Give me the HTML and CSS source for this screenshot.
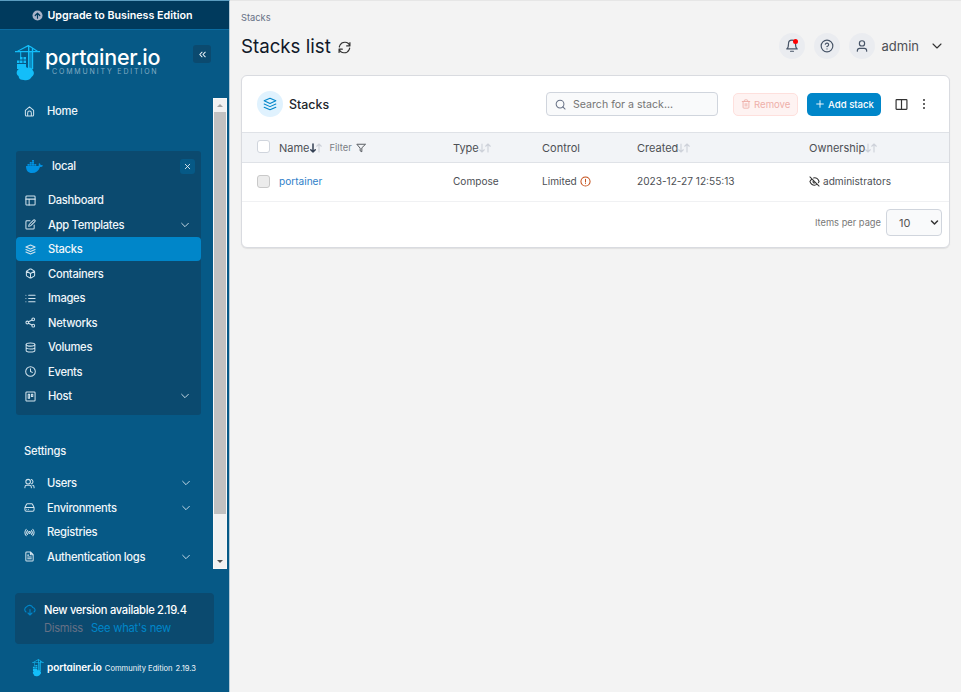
FILE: index.html
```
<!DOCTYPE html>
<html lang="en">
<head>
    <meta charset="UTF-8">
    <title>Portainer</title>
    <link rel="stylesheet" href="styles.css">
</head>
<body>
    <!-- shared icons -->
    <svg class="sprite" width="0" height="0">
        <symbol id="i-up" viewBox="0 0 24 24"><circle cx="12" cy="12" r="11" fill="#a9b3c9" stroke="none"/><path d="M12 18V7M7 12l5-5 5 5" stroke="#003a5d" stroke-width="2.6"/></symbol>
        <symbol id="i-chevs" viewBox="0 0 24 24"><path d="m11 17-5-5 5-5M18 17l-5-5 5-5"/></symbol>
        <symbol id="i-home" viewBox="0 0 24 24"><path d="M8 21v-6a4 4 0 0 1 8 0v6M3 9.500 12 2l9 7.500V19a3 3 0 0 1-3 3H6a3 3 0 0 1-3-3z"/></symbol>
        <symbol id="i-x" viewBox="0 0 24 24"><path d="M18 6 6 18M6 6l12 12"/></symbol>
        <symbol id="i-layout" viewBox="0 0 24 24"><rect x="2" y="2" width="20" height="20" rx="2"/><path d="M2 9h20M9 22V9"/></symbol>
        <symbol id="i-edit" viewBox="0 0 24 24"><path d="M11 4H4a2 2 0 0 0-2 2v14a2 2 0 0 0 2 2h14a2 2 0 0 0 2-2v-7"/><path d="M18.500 2.500a2.120 2.120 0 0 1 3 3L12 15l-4 1 1-4z"/></symbol>
        <symbol id="i-layers" viewBox="0 0 24 24"><path d="M12 2 2 6.500 12 11l10-4.500zM2 12l10 4.500L22 12M2 17.500 12 22l10-4.500"/></symbol>
        <symbol id="i-box" viewBox="0 0 24 24"><path d="M21 16V8a2 2 0 0 0-1-1.730l-7-4a2 2 0 0 0-2 0l-7 4A2 2 0 0 0 3 8v8a2 2 0 0 0 1 1.730l7 4a2 2 0 0 0 2 0l7-4A2 2 0 0 0 21 16zM3.300 7 12 12l8.700-5M12 22V12"/></symbol>
        <symbol id="i-list" viewBox="0 0 24 24"><path d="M8 5h14M8 12h14M8 19h14M2 5h.01M2 12h.01M2 19h.01"/></symbol>
        <symbol id="i-share" viewBox="0 0 24 24"><circle cx="18" cy="5" r="3"/><circle cx="5" cy="12" r="3"/><circle cx="18" cy="19" r="3"/><path d="m7.600 13.500 7.800 4M15.400 6.500l-7.800 4"/></symbol>
        <symbol id="i-db" viewBox="0 0 24 24"><ellipse cx="12" cy="5.500" rx="9.500" ry="3.500"/><path d="M21.500 12c0 2-4 3.500-9.500 3.500S2.500 14 2.500 12M2.500 5.500v13c0 2 4 3.500 9.500 3.500s9.500-1.500 9.500-3.500v-13"/></symbol>
        <symbol id="i-clock" viewBox="0 0 24 24"><circle cx="12" cy="12" r="10.500"/><path d="M12 6v6l4 2"/></symbol>
        <symbol id="i-trello" viewBox="0 0 24 24"><rect x="2" y="2" width="20" height="20" rx="2"/><path d="M7 7h3v9H7zM14 7h3v5h-3z"/></symbol>
        <symbol id="i-users" viewBox="0 0 24 24"><circle cx="9" cy="8" r="5"/><path d="M2 21v-1a4 4 0 0 1 4-4h6a4 4 0 0 1 4 4v1M16 3.200a5 5 0 0 1 0 9.600M19 16c2 .500 3 2 3 4v1"/></symbol>
        <symbol id="i-drive" viewBox="0 0 24 24"><path d="M2 12h20M5.500 5.100 2 12v5a3 3 0 0 0 3 3h14a3 3 0 0 0 3-3v-5l-3.500-6.900A2 2 0 0 0 16.800 4H7.200a2 2 0 0 0-1.700 1.100zM6 16h.01M10 16h.01"/></symbol>
        <symbol id="i-radio" viewBox="0 0 24 24"><circle cx="12" cy="12" r="2"/><path d="M4.900 19.100a10 10 0 0 1 0-14.200M7.800 16.200a6 6 0 0 1 0-8.400M16.200 7.800a6 6 0 0 1 0 8.400M19.100 4.900a10 10 0 0 1 0 14.200"/></symbol>
        <symbol id="i-file" viewBox="0 0 24 24"><path d="M14 2H6a2 2 0 0 0-2 2v16a2 2 0 0 0 2 2h12a2 2 0 0 0 2-2V8zM14 2v6h6M8 13h8M8 17h8M8 9h2"/></symbol>
        <symbol id="i-down" viewBox="0 0 24 24"><path d="m4 8 8 8 8-8"/></symbol>
        <symbol id="i-cloud" viewBox="0 0 24 24"><path d="M12 11v11M8 18l4 4 4-4M4 16a6 6 0 0 1 1.500-10.500 7 7 0 0 1 12 1.500 5 5 0 0 1 2.500 9"/></symbol>
        <symbol id="i-refresh" viewBox="0 0 24 24"><path d="M22 3v6h-6M2 21v-6h6M22 9A10 10 0 0 0 3.500 8 10 10 0 0 0 2.500 11M2 15a10 10 0 0 0 18.500 1 10 10 0 0 0 1-3"/></symbol>
        <symbol id="i-bell" viewBox="0 0 24 24"><path d="M18 8A6 6 0 0 0 6 8c0 7-3 9-3 9h18s-3-2-3-9M9.500 21h5"/></symbol>
        <symbol id="i-help" viewBox="0 0 24 24"><circle cx="12" cy="12" r="10"/><path d="M9.100 9a3 3 0 0 1 5.800 1c0 2-3 3-3 3M12 17h.01"/></symbol>
        <symbol id="i-user" viewBox="0 0 24 24"><circle cx="12" cy="7.500" r="4.500"/><path d="M4 21v-1a4 4 0 0 1 4-4h8a4 4 0 0 1 4 4v1"/></symbol>
        <symbol id="i-search" viewBox="0 0 24 24"><circle cx="11" cy="11" r="8.500"/><path d="m22 22-4.800-4.800"/></symbol>
        <symbol id="i-trash" viewBox="0 0 24 24"><path d="M3 6h18M19 6v14a2 2 0 0 1-2 2H7a2 2 0 0 1-2-2V6M8 6V4a2 2 0 0 1 2-2h4a2 2 0 0 1 2 2v2M10 11v6M14 11v6"/></symbol>
        <symbol id="i-plus" viewBox="0 0 24 24"><path d="M12 4v16M4 12h16"/></symbol>
        <symbol id="i-columns" viewBox="0 0 24 24"><rect x="2" y="3" width="20" height="18" rx="1"/><path d="M12 3v18"/></symbol>
        <symbol id="i-more" viewBox="0 0 24 24"><path d="M12 4v.01M12 12v.01M12 20v.01"/></symbol>
        <symbol id="i-filter" viewBox="0 0 24 24"><path d="M22 3H2l8 9.500V19l4 2v-8.500z"/></symbol>
        <symbol id="i-arrdown" viewBox="0 0 12 20"><path d="M6 2v16M1.500 13.500 6 18l4.500-4.500"/></symbol>
        <symbol id="i-arrup" viewBox="0 0 12 20"><path d="M6 18V2M1.500 6.500 6 2l4.500 4.500"/></symbol>
        <symbol id="i-alert" viewBox="0 0 24 24"><circle cx="12" cy="12" r="10"/><path d="M12 7v6M12 16.500v.01"/></symbol>
        <symbol id="i-eyeoff" viewBox="0 0 24 24"><path d="M9.900 4.200A10 10 0 0 1 12 4c7 0 10 8 10 8a13 13 0 0 1-1.700 2.700M6.600 6.600A13.500 13.500 0 0 0 2 12s3 8 10 8a9.700 9.700 0 0 0 5.400-1.600M2 2l20 20M9.900 9.900a3 3 0 1 0 4.200 4.200"/></symbol>
        <symbol id="i-docker" viewBox="0 0 34 26"><path d="M0 12h25c1-2 0-4 1-6 2 1 3 2 3 4 2-.500 4 0 5 1-1 2-3 3-6 3-3 8-8 12-16 12C4 26 0 21 0 12zM3 8h4v3.500H3zM7.500 8h4v3.500h-4zM12 8h4v3.500h-4zM16.500 8h4v3.500h-4zM7.500 4h4v3.500h-4zM12 4h4v3.500h-4zM12 0h4v3.500h-4z" fill="#0091e2" stroke="none"/></symbol>
        <symbol id="i-crane" viewBox="0 0 25 36">
            <g fill="#13bef9" stroke="none">
                <path d="M0 6h25v1.300H0zM13 0h1.400v24H13zM16.800 3h1.400v21h-1.400zM13 0 2 6h2l9-4.500zM14 0l9 6h-2l-7-4.600zM5.200 7h1v5h-1z"/>
                <path d="M5 12h2.500v2.500H5zM8.500 12H11v2.500H8.500zM2 15.500h2.500V18H2zM5 15.500h2.500V18H5zM8.500 15.500H11V18H8.500zM2 19h9v5H2z"/>
                <path d="M4.500 23.500a4 4 0 0 1 7.500-.500c3-1 5.500 0 5.800 2.500 2 2 1 5-1 6.300-1.500 3.200-5.500 4.200-8 3.200-3 0-5-1-5.300-4-3-2-2-6 1-7.500z"/>
                <path d="M14.400 7h2.400v17h-2.400z" opacity=".5"/>
            </g>
        </symbol>
    </svg>

    <div class="app">
        <aside class="sidebar">
            <div class="upgrade"><svg class="ic"><use href="#i-up"/></svg>Upgrade to Business Edition</div>
            <div class="brand">
                <svg class="brand-logo"><use href="#i-crane"/></svg>
                <div class="brand-text">
                    <div class="brand-name">portainer.io</div>
                    <div class="brand-sub">COMMUNITY EDITION</div>
                </div>
                <div class="collapse"><svg class="ic"><use href="#i-chevs"/></svg></div>
            </div>

            <div class="nav-wrap">
                <nav class="nav">
                    <div class="item home"><svg class="ic"><use href="#i-home"/></svg><span>Home</span></div>
                    <div class="env">
                        <div class="env-head">
                            <svg class="docker"><use href="#i-docker"/></svg><span>local</span>
                            <div class="close"><svg class="ic"><use href="#i-x"/></svg></div>
                        </div>
                        <div class="item"><svg class="ic"><use href="#i-layout"/></svg><span>Dashboard</span></div>
                        <div class="item"><svg class="ic"><use href="#i-edit"/></svg><span>App Templates</span><svg class="chev"><use href="#i-down"/></svg></div>
                        <div class="item active"><svg class="ic"><use href="#i-layers"/></svg><span>Stacks</span></div>
                        <div class="item"><svg class="ic"><use href="#i-box"/></svg><span>Containers</span></div>
                        <div class="item"><svg class="ic"><use href="#i-list"/></svg><span>Images</span></div>
                        <div class="item"><svg class="ic"><use href="#i-share"/></svg><span>Networks</span></div>
                        <div class="item"><svg class="ic"><use href="#i-db"/></svg><span>Volumes</span></div>
                        <div class="item"><svg class="ic"><use href="#i-clock"/></svg><span>Events</span></div>
                        <div class="item"><svg class="ic"><use href="#i-trello"/></svg><span>Host</span><svg class="chev"><use href="#i-down"/></svg></div>
                    </div>
                    <div class="section">Settings</div>
                    <div class="settings">
                        <div class="item"><svg class="ic"><use href="#i-users"/></svg><span>Users</span><svg class="chev"><use href="#i-down"/></svg></div>
                        <div class="item"><svg class="ic"><use href="#i-drive"/></svg><span>Environments</span><svg class="chev"><use href="#i-down"/></svg></div>
                        <div class="item"><svg class="ic"><use href="#i-radio"/></svg><span>Registries</span></div>
                        <div class="item"><svg class="ic"><use href="#i-file"/></svg><span>Authentication logs</span><svg class="chev"><use href="#i-down"/></svg></div>
                    </div>
                </nav>
                <div class="scrollbar">
                    <div class="arrow arrow-up"></div>
                    <div class="thumb"></div>
                    <div class="arrow arrow-down"></div>
                </div>
            </div>

            <div class="update">
                <svg class="ic"><use href="#i-cloud"/></svg>
                <div>
                    <div class="update-title">New version available 2.19.4</div>
                    <div class="update-links"><span class="dismiss">Dismiss</span><a>See what's new</a></div>
                </div>
            </div>
            <div class="footer">
                <svg class="footer-logo"><use href="#i-crane"/></svg>
                <span class="footer-name">portainer.io</span>
                <span class="footer-text">Community Edition</span>
                <span class="footer-text">2.19.3</span>
            </div>
        </aside>

        <main class="main">
            <div class="crumb">Stacks</div>
            <header class="header">
                <h1>Stacks list</h1>
                <svg class="refresh"><use href="#i-refresh"/></svg>
                <div class="user-menu">
                    <div class="round bell"><svg class="ic"><use href="#i-bell"/></svg><i class="dot"></i></div>
                    <div class="round"><svg class="ic"><use href="#i-help"/></svg></div>
                    <div class="round"><svg class="ic"><use href="#i-user"/></svg></div>
                    <span class="user-name">admin</span>
                    <svg class="chev"><use href="#i-down"/></svg>
                </div>
            </header>

            <section class="card">
                <div class="toolbar">
                    <div class="badge"><svg class="ic"><use href="#i-layers"/></svg></div>
                    <h2>Stacks</h2>
                    <div class="search"><svg class="ic"><use href="#i-search"/></svg>Search for a stack...</div>
                    <div class="btn btn-remove"><svg class="ic"><use href="#i-trash"/></svg>Remove</div>
                    <div class="btn btn-add"><svg class="ic"><use href="#i-plus"/></svg>Add stack</div>
                    <svg class="tool"><use href="#i-columns"/></svg>
                    <svg class="tool more"><use href="#i-more"/></svg>
                </div>
                <div class="row head">
                    <div><i class="check"></i></div>
                    <div>Name<svg class="arr on"><use href="#i-arrdown"/></svg><svg class="arr"><use href="#i-arrup"/></svg><span class="filter">Filter</span><svg class="funnel"><use href="#i-filter"/></svg></div>
                    <div>Type<svg class="arr"><use href="#i-arrdown"/></svg><svg class="arr"><use href="#i-arrup"/></svg></div>
                    <div>Control</div>
                    <div>Created<svg class="arr"><use href="#i-arrdown"/></svg><svg class="arr"><use href="#i-arrup"/></svg></div>
                    <div>Ownership<svg class="arr"><use href="#i-arrdown"/></svg><svg class="arr"><use href="#i-arrup"/></svg></div>
                </div>
                <div class="row body">
                    <div><i class="check disabled"></i></div>
                    <div><a class="link">portainer</a></div>
                    <div>Compose</div>
                    <div>Limited<svg class="alert"><use href="#i-alert"/></svg></div>
                    <div>2023-12-27 12:55:13</div>
                    <div><svg class="eye"><use href="#i-eyeoff"/></svg>administrators</div>
                </div>
                <div class="pager">
                    <span>Items per page</span>
                    <div class="select">10<svg class="chev"><use href="#i-down"/></svg></div>
                </div>
            </section>
        </main>
    </div>
</body>
</html>
```
FILE: styles.css
```
* {
    box-sizing: border-box;
}
body {
    margin: 0;
    height: 692px;
    overflow: hidden;
    font-family: Inter, "Liberation Sans", sans-serif;
    font-size: 11px;
    color: #4d5055;
    background: #f3f3f3;
}
svg {
    fill: none;
    stroke: currentColor;
    stroke-width: 2.2;
    stroke-linecap: round;
    stroke-linejoin: round;
    flex: none;
}
.sprite {
    position: absolute;
}
.app {
    display: flex;
    height: 692px;
    border-top: 1px solid #e6e6e6;
}
.ic {
    width: 11px;
    height: 11px;
}
.chev {
    width: 10px;
    height: 10px;
}

/* sidebar */
.sidebar {
    display: flex;
    flex-direction: column;
    width: 230px;
    margin-top: -1px;
    background: #065986;
    border-top: 1px solid #5a9cc0;
    border-right: 1px solid #b4cad7;
    color: #f0f6fa;
}
.upgrade {
    display: flex;
    align-items: center;
    justify-content: center;
    gap: 4px;
    height: 29px;
    padding-right: 4px;
    background: #003a5d;
    border-bottom: 1px solid #0b6ba0;
    font-size: 10.7px;
    font-weight: 600;
    color: #fff;
}
.brand {
    display: flex;
    align-items: flex-start;
    height: 68px;
    padding: 15px 18px 0 15px;
}
.brand-logo {
    width: 25px;
    height: 36px;
}
.brand-text {
    width: 125px;
    margin-left: 5px;
    white-space: nowrap;
}
.brand-name {
    height: 24px;
    font-size: 21.5px;
    line-height: 24px;
    font-weight: 500;
    letter-spacing: -0.25px;
    font-feature-settings: "cv11";
    color: #fff;
}
.brand-sub {
    margin: -1px 0 0 7px;
    font-size: 7px;
    line-height: 8px;
    letter-spacing: 1.85px;
    color: #83acc4;
}
.collapse {
    display: flex;
    align-items: center;
    justify-content: center;
    width: 18px;
    height: 18px;
    margin-left: auto;
    background: #0b4a6f;
    border-radius: 3px;
}
.nav-wrap {
    display: flex;
    height: 471px;
}
.nav {
    width: 213px;
    padding: 1px 0 0 15px;
}
.item {
    display: flex;
    align-items: center;
    height: 24.540px;
    padding: 0 10px 0 9px;
    font-size: 11.2px;
    font-weight: 500;
    letter-spacing: -0.29px;
}
.item .ic {
    margin-right: 12px;
    color: #d3e4ee;
}
.item .chev {
    margin-left: auto;
    color: #d3e4ee;
}
.env {
    width: 185px;
    height: 264px;
    margin: 27.3px 0 0 1px;
    background: #0b4a6f;
    border-radius: 3px;
}
.env-head {
    display: flex;
    align-items: center;
    height: 31px;
    margin-bottom: 6px;
    padding: 0 6px 0 10px;
    font-size: 11.2px;
    font-weight: 500;
    letter-spacing: -0.29px;
}
.docker {
    width: 17px;
    height: 13px;
    margin-right: 9px;
}
.close {
    display: flex;
    align-items: center;
    justify-content: center;
    width: 15px;
    height: 15px;
    margin-left: auto;
    background: #065986;
    border-radius: 3px;
}
.close .ic {
    width: 9px;
    height: 9px;
    margin: 0;
}
.env .item .chev {
    margin-right: 1px;
}
.active {
    background: #0086c9;
    border-radius: 4px;
}
.section {
    padding: 29px 0 0 9px;
    font-size: 11.2px;
    font-weight: 500;
    line-height: 14px;
    letter-spacing: -0.2px;
}
.settings {
    width: 185px;
    padding-top: 13px;
}
.settings .chev {
    margin-right: -1px;
}
.scrollbar {
    display: flex;
    flex-direction: column;
    width: 14px;
    background: #f1f1f1;
    border: 1px solid #f8f8f8;
}
.arrow {
    flex: none;
    height: 13px;
    padding: 5px 3px;
}
.arrow::before {
    content: "";
    display: block;
    border: 3px solid transparent;
}
.arrow-up::before {
    margin-top: -3px;
    border-bottom-color: #a3a3a3;
}
.arrow-down::before {
    border-top-color: #505050;
}
.thumb {
    height: 402px;
    margin-bottom: auto;
    background: #c1c1c1;
}
.update {
    display: flex;
    width: 199px;
    height: 51px;
    margin: 24px 0 0 15px;
    padding: 8px 9px 0;
    background: #0b4a6f;
    border-radius: 4px;
    font-size: 11.2px;
    line-height: 18px;
    letter-spacing: -0.3px;
    white-space: nowrap;
}
.update .ic {
    width: 12px;
    height: 12px;
    margin: 3px 8px 0 0;
    color: #0086c9;
}
.update-title {
    font-weight: 500;
    color: #fff;
}
.update-links {
    display: flex;
    gap: 8px;
    letter-spacing: -0.25px;
    color: #0086c9;
}
.dismiss {
    letter-spacing: -0.3px;
    color: #667085;
}
.footer {
    display: flex;
    align-items: center;
    margin: 15px 0 0 32px;
    font-size: 7.6px;
}
.footer-logo {
    width: 12px;
    height: 18px;
}
.footer-name {
    margin: -2px 0 0 3px;
    font-size: 10px;
    font-weight: 600;
    letter-spacing: -0.1px;
    font-feature-settings: "cv11";
    color: #fff;
}
.footer-text {
    margin: 1px 0 0 3px;
}

/* content */
.main {
    flex: 1;
    padding: 11px 11px 0;
}
.crumb {
    font-size: 9.3px;
    line-height: 12px;
    color: #667085;
}
.header {
    display: flex;
    align-items: center;
    height: 45px;
    padding-bottom: 1px;
}
h1 {
    margin: 0;
    font-size: 18.7px;
    font-weight: 400;
    color: #101828;
}
.refresh {
    width: 13px;
    height: 13px;
    margin: 2px 0 0 7px;
    color: #333;
}
.user-menu {
    display: flex;
    align-items: center;
    margin: 0 7px 0 auto;
}
.round {
    position: relative;
    display: flex;
    align-items: center;
    justify-content: center;
    width: 26px;
    height: 26px;
    margin-right: 9px;
    background: #eaecf0;
    border-radius: 50%;
    color: #475467;
}
.round .ic {
    width: 14px;
    height: 14px;
    stroke-width: 2;
}
.dot {
    position: absolute;
    top: 6px;
    right: 7px;
    width: 5px;
    height: 5px;
    background: #f00;
    border-radius: 50%;
}
.user-name {
    margin-left: -2px;
    font-size: 13px;
}
.user-menu .chev {
    width: 12px;
    height: 12px;
    margin-left: 12px;
    color: #333;
}
.card {
    width: 709px;
    height: 173px;
    margin-top: 6px;
    background: #fff;
    border: 1px solid #d9dbe0;
    border-radius: 6px;
    box-shadow: 0 1px 1px #e0e0e0;
}
.toolbar {
    display: flex;
    align-items: center;
    height: 56px;
    padding: 0 19px 0 15px;
}
.badge {
    display: flex;
    align-items: center;
    justify-content: center;
    width: 26px;
    height: 26px;
    background: #e0f2fe;
    border-radius: 50%;
    color: #0086c9;
}
.badge .ic {
    width: 14px;
    height: 14px;
    stroke-width: 1.8;
}
h2 {
    margin: 0 auto 0 6px;
    font-size: 12.4px;
    font-weight: 500;
    color: #22252b;
}
.search {
    display: flex;
    align-items: center;
    width: 172px;
    height: 24px;
    padding-left: 8px;
    background: #f9fafb;
    border: 1px solid #d0d5dd;
    border-radius: 4px;
    font-size: 10.6px;
    color: #757575;
}
.search .ic {
    margin-right: 7px;
    color: #667085;
}
.btn {
    display: flex;
    align-items: center;
    height: 23px;
    border-radius: 5px;
    font-size: 9.6px;
    white-space: nowrap;
}
.btn .ic {
    width: 10px;
    height: 10px;
    margin-right: 3px;
}
.btn-remove {
    width: 65px;
    margin-left: 15px;
    padding-left: 7px;
    background: #fef3f2;
    border: 1px solid #fee0dd;
    color: #eeb0aa;
}
.btn-add {
    width: 74px;
    margin-left: 9px;
    padding-left: 8px;
    background: #0086c9;
    font-weight: 500;
    color: #fff;
}
.tool {
    width: 13px;
    height: 13px;
    margin-left: 14px;
    color: #333;
}
.more {
    width: 12px;
    height: 12px;
    margin-left: 10px;
    stroke-width: 4;
}
.row {
    display: grid;
    grid-template-columns: 37px 174px 89px 95px 172px 1fr;
    align-items: center;
}
.row > div {
    display: flex;
    align-items: center;
    white-space: nowrap;
}
.row > div:first-child {
    padding-left: 15px;
}
.head {
    height: 31px;
    background: #f2f4f7;
    border: solid #dfe2e7;
    border-width: 1px 0;
    font-size: 11px;
}
.body {
    height: 39px;
    padding-bottom: 2px;
    border-bottom: 1px solid #f0f1f3;
    font-size: 10.1px;
}
.check {
    width: 13px;
    height: 13px;
    margin-top: -3px;
    background: #fff;
    border: 1px solid #d0d5dd;
    border-radius: 3px;
}
.disabled {
    margin-top: 0;
    background: #ececec;
    border-color: #c9c9c9;
}
.arr {
    width: 6px;
    height: 10px;
    color: #cdd1d9;
}
.on {
    color: #344054;
    stroke-width: 3;
}
.filter {
    margin: 0 4px 0 8px;
    font-size: 9.4px;
    color: #7a7d84;
}
.funnel {
    width: 10px;
    height: 10px;
}
.link {
    color: #2f7fc9;
}
.alert {
    width: 11px;
    height: 11px;
    margin-left: 3px;
    color: #c4501b;
}
.eye {
    width: 11px;
    height: 11px;
    margin-right: 3px;
    color: #333;
}
.pager {
    display: flex;
    align-items: center;
    justify-content: flex-end;
    padding: 7px 7px 0 0;
    font-size: 9.3px;
    color: #777;
}
.pager span {
    margin-bottom: 1px;
}
.select {
    display: flex;
    align-items: center;
    width: 56px;
    height: 27px;
    margin-left: 5px;
    padding: 0 2px 0 12px;
    background: #f9fafb;
    border: 1px solid #d0d5dd;
    border-radius: 4px;
    font-size: 11px;
    color: #555;
}
.select .chev {
    width: 9px;
    height: 9px;
    margin-left: auto;
    stroke-width: 4;
    color: #333;
}
```
